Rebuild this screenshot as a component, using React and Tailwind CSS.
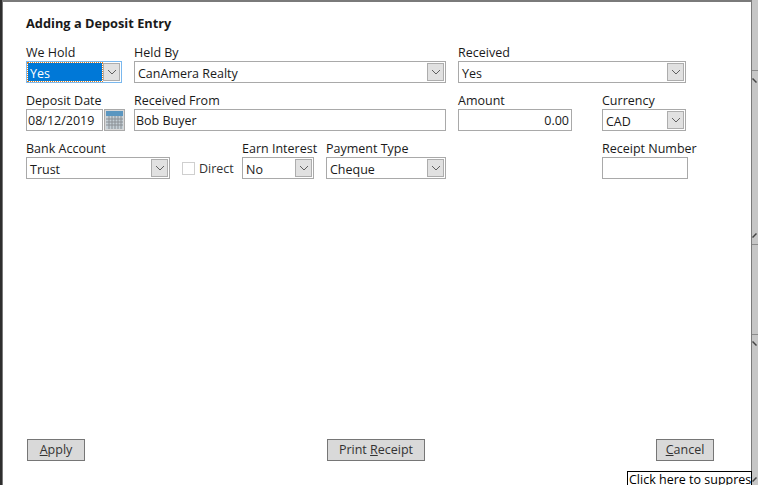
import React from 'react'

const Chevron = () => (
  <svg width="10" height="6" viewBox="0 0 10 6" fill="none">
    <path d="M1 1l4 4 4-4" stroke="#606060" strokeWidth="1" />
  </svg>
)

const Label = ({ children }) => (
  <div className="h-[17px] leading-[17px] text-[12.5px] text-[#1a1a1a] whitespace-nowrap">{children}</div>
)

const Select = ({ value, focused }) => (
  <div className={`flex h-[22px] items-center border ${focused ? 'border-[#7ab8ee]' : 'border-[#a9a9a9]'} bg-white pl-[1px] pr-[1px]`}>
    <div className={`flex h-[18px] flex-1 items-center pl-[2px] pt-[5px] text-[12.5px] ${focused ? 'bg-[#0078d7] text-white outline-1 outline-dotted outline-[#e08020]' : 'text-[#1a1a1a]'}`}>
      {value}
    </div>
    <div className="ml-[1px] flex h-[18px] w-[17px] shrink-0 items-center justify-center border border-[#adadad] bg-[#e1e1e1]">
      <Chevron />
    </div>
  </div>
)

const Input = ({ value, right }) => (
  <div className={`flex h-[22px] items-center border border-[#a9a9a9] bg-white pl-[1px] pr-[2px] pt-[2px] text-[12.5px] text-[#1a1a1a] ${right ? 'justify-end' : ''}`}>
    {value}
  </div>
)

const Btn = ({ children, className }) => (
  <button className={`h-[22px] border border-[#767676] bg-[#d9d9d9] text-[12.5px] text-[#333] ${className}`}>{children}</button>
)

const Calendar = () => (
  <svg width="21" height="22" viewBox="0 0 21 22" className="ml-[1px] shrink-0">
    <rect x="0.5" y="0.5" width="20" height="21" fill="#d8d8d8" stroke="#a9a9a9" />
    <rect x="2" y="2" width="17" height="5" fill="#5a96c0" />
    <rect x="2" y="7" width="17" height="13" fill="#c4cfd6" />
    <path d="M2 10h17M2 13h17M2 16h17M5 7v13M8 7v13M11 7v13M14 7v13M17 7v13" stroke="#8a8f94" strokeWidth="1" />
  </svg>
)

// little dark ticks on the strip at the right edge
const Tick = ({ className, flip }) => (
  <svg width="5" height="5" viewBox="0 0 5 5" className={`absolute left-[752px] ${className}`}>
    <path d={flip ? 'M0.5 4.5L4.5 0.5' : 'M0.5 0.5L4.5 4.5'} stroke="#444" strokeWidth="1.5" />
  </svg>
)

export default function App() {
  return (
    <div className="relative flex h-[485px] w-[758px] overflow-hidden bg-[#c6c6c6] font-['Open_Sans','Noto_Sans',sans-serif]">
      <div className="w-[2px] shrink-0 bg-[#2e2e2e]" />

      {/* dialog */}
      <div className="flex h-[485px] w-[750px] shrink-0 flex-col border-t-2 border-r border-l border-t-[#7a7a7a] border-r-[#7a7a7a] border-l-[#7a7a7a] bg-white pl-[23px]">
        <div className="mt-[13px] h-[17px] text-[12.8px] leading-[17px] font-bold text-[#1a1a1a]">Adding a Deposit Entry</div>

        <div className="mt-[12px] flex">
          <div className="w-[96px]">
            <Label>We Hold</Label>
            <Select value="Yes" focused />
          </div>
          <div className="ml-[12px] w-[312px]">
            <Label>Held By</Label>
            <Select value="CanAmera Realty" />
          </div>
          <div className="ml-[12px] w-[228px]">
            <Label>Received</Label>
            <Select value="Yes" />
          </div>
        </div>

        <div className="mt-[9px] flex">
          <div className="w-[99px]">
            <Label>Deposit Date</Label>
            <div className="flex">
              <div className="w-[77px]"><Input value="08/12/2019" /></div>
              <Calendar />
            </div>
          </div>
          <div className="ml-[9px] w-[312px]">
            <Label>Received From</Label>
            <Input value="Bob Buyer" />
          </div>
          <div className="ml-[12px] w-[114px]">
            <Label>Amount</Label>
            <Input value="0.00" right />
          </div>
          <div className="ml-[30px] w-[84px]">
            <Label>Currency</Label>
            <Select value="CAD" />
          </div>
        </div>

        <div className="mt-[9px] flex">
          <div className="w-[144px]">
            <Label>Bank Account</Label>
            <Select value="Trust" />
          </div>
          <div className="ml-[12px] flex h-[22px] w-[48px] items-center self-end">
            <div className="h-[13px] w-[13px] shrink-0 border border-[#cfcfcf] bg-white" />
            <span className="ml-[4px] pt-[2px] text-[12.5px] text-[#333]">Direct</span>
          </div>
          <div className="ml-[12px] w-[72px]">
            <Label>Earn Interest</Label>
            <Select value="No" />
          </div>
          <div className="ml-[12px] w-[120px]">
            <Label>Payment Type</Label>
            <Select value="Cheque" />
          </div>
          <div className="ml-[156px] w-[86px]">
            <Label>Receipt Number</Label>
            <Input value="" />
          </div>
        </div>

        <div className="mt-[260px] flex pl-[1px]">
          <Btn className="w-[58px]"><u>A</u>pply</Btn>
          <Btn className="ml-[242px] w-[98px]">Print <u>R</u>eceipt</Btn>
          <Btn className="ml-[231px] w-[58px]"><u>C</u>ancel</Btn>
        </div>
      </div>

      {/* right strip behind the dialog */}
      <div className="flex flex-1 flex-col">
        <div className="mt-[70px] h-px bg-[#8c8c8c]" />
        <div className="mt-[173px] h-px bg-[#8c8c8c]" />
        <div className="mt-[89px] h-px bg-[#8c8c8c]" />
      </div>
      <Tick className="top-[78px]" />
      <Tick className="top-[233px]" flip />
      <Tick className="top-[341px]" />
      <Tick className="top-[477px]" flip />

      {/* tooltip over the corner */}
      <div className="absolute top-[471px] left-[627px] h-[14px] w-[125px] overflow-hidden whitespace-nowrap border-t border-r border-l border-black bg-white pl-[1px] text-[12.5px] leading-[15px] text-black">
        Click here to suppress
      </div>
    </div>
  )
}
